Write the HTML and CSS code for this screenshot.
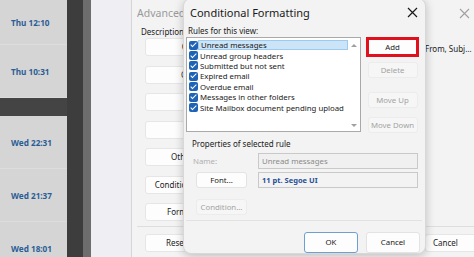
FILE: index.html
```html
<!DOCTYPE html>
<html lang="en">
<head>
    <meta charset="UTF-8">
    <title>Conditional Formatting</title>
    <link rel="stylesheet" href="styles.css">
</head>
<body>
    <div class="screen">
        <div class="msg-list">
            <div class="msg-row short">Thu 12:10</div>
            <div class="msg-row">Thu 10:31</div>
            <div class="msg-band"></div>
            <div class="msg-row">Wed 22:31</div>
            <div class="msg-row">Wed 21:37</div>
            <div class="msg-row">Wed 18:01</div>
        </div>
        <div class="strip-dark"></div>
        <div class="strip-mid"></div>
        <div class="strip-light"></div>

        <div class="adv">
            <div class="adv-title">
                <span class="adv-name">Advanced View Settings: Compact</span>
                <svg width="11" height="11" viewBox="0 0 11 11"><path d="M1 1L10 10M10 1L1 10" stroke="#a0a0a0" stroke-width="1.1"/></svg>
            </div>
            <div class="adv-desc">Description</div>
            <div class="adv-body">
                <div class="adv-col">
                    <div class="adv-btn">Columns...</div>
                    <div class="adv-btn">Group By...</div>
                    <div class="adv-btn">Sort...</div>
                    <div class="adv-btn">Filter...</div>
                    <div class="adv-btn">Other Settings...</div>
                    <div class="adv-btn">Conditional Formatting...</div>
                    <div class="adv-btn">Format Columns...</div>
                </div>
                <div class="adv-values">
                    <div class="adv-value">From, Subject, Received</div>
                </div>
            </div>
            <div class="adv-foot">
                <div class="adv-col">
                    <div class="adv-btn">Reset Current View</div>
                </div>
                <div class="adv-cancel">Cancel</div>
            </div>
        </div>

        <div class="cf">
            <div class="cf-title">
                <span>Conditional Formatting</span>
                <svg width="11" height="11" viewBox="0 0 11 11"><path d="M1 1L10 10M10 1L1 10" stroke="#1a1a1a" stroke-width="1.2"/></svg>
            </div>
            <div class="cf-body">
                <div class="cf-label">Rules for this view:</div>
                <div class="cf-rules">
                    <div class="rule-box">
                        <div class="rule-items">
                            <div class="rule"><span class="check"></span><span class="rule-text selected">Unread messages</span></div>
                            <div class="rule"><span class="check"></span><span class="rule-text">Unread group headers</span></div>
                            <div class="rule"><span class="check"></span><span class="rule-text">Submitted but not sent</span></div>
                            <div class="rule"><span class="check"></span><span class="rule-text">Expired email</span></div>
                            <div class="rule"><span class="check"></span><span class="rule-text">Overdue email</span></div>
                            <div class="rule"><span class="check"></span><span class="rule-text">Messages in other folders</span></div>
                            <div class="rule"><span class="check"></span><span class="rule-text">Site Mailbox document pending upload</span></div>
                        </div>
                        <div class="scrollbar">
                            <span class="arrow up"></span>
                            <span class="arrow down"></span>
                        </div>
                    </div>
                    <div class="rule-actions">
                        <div class="mark"><div class="btn">Add</div></div>
                        <div class="btn disabled">Delete</div>
                        <div class="btn disabled move-up">Move Up</div>
                        <div class="btn disabled">Move Down</div>
                    </div>
                </div>
                <div class="props">
                    <div class="props-title">Properties of selected rule</div>
                    <div class="props-row">
                        <span class="props-name">Name:</span>
                        <div class="field readonly">Unread messages</div>
                    </div>
                    <div class="props-row">
                        <div class="btn small">Font...</div>
                        <div class="field font">11 pt. Segoe UI</div>
                    </div>
                    <div class="props-row cond">
                        <div class="btn small disabled">Condition...</div>
                    </div>
                </div>
                <div class="cf-foot">
                    <div class="btn wide primary">OK</div>
                    <div class="btn wide">Cancel</div>
                </div>
            </div>
        </div>
    </div>
</body>
</html>
```

FILE: styles.css
```css
body {
    margin: 0;
    font-family: "Noto Sans", "Open Sans", sans-serif;
    overflow: hidden;
}
.screen {
    position: relative;
    display: flex;
    width: 474px;
    height: 257px;
    overflow: hidden;
    background-color: #efeff3;
}

/* message list on the left */
.msg-list {
    width: 67px;
    flex: none;
    background-color: #d5d5d5;
}
.msg-row {
    height: 53px;
    box-sizing: border-box;
    border-bottom: 1px solid #dcdcdc;
    padding-left: 11px;
    display: flex;
    align-items: center;
    font-size: 8.2px;
    font-weight: bold;
    color: #2a5d96;
}
.msg-row.short {
    height: 45px;
}
.msg-band {
    height: 18px;
    background-color: #444444;
}
.strip-dark {
    width: 16px;
    flex: none;
    background-color: #3d3d3d;
}
.strip-mid {
    width: 8px;
    flex: none;
    background-color: #6d6d6d;
}
.strip-light {
    width: 40px;
    flex: none;
    border-right: 1px solid #d6d6d6;
}

/* advanced view settings dialog behind */
.adv {
    flex: 1;
    background-color: #f3f3f3;
    display: flex;
    flex-direction: column;
    padding-left: 5px;
}
.adv-title {
    height: 26px;
    display: flex;
    align-items: center;
    justify-content: space-between;
    padding-right: 4px;
    font-size: 10.5px;
    color: #9a9a9a;
}
.adv-name {
    width: 50px;
    overflow: hidden;
    white-space: nowrap;
}
.adv-desc {
    font-size: 8px;
    color: #222;
    padding-left: 4px;
    height: 12px;
    line-height: 12px;
}
.adv-body {
    display: flex;
    padding-left: 8px;
    flex: 1;
}
.adv-col {
    display: flex;
    flex-direction: column;
    gap: 9.5px;
    width: 40px;
    overflow: hidden;
    flex: none;
}
.adv-btn {
    width: 113px;
    height: 18px;
    line-height: 16px;
    box-sizing: border-box;
    background-color: #fdfdfd;
    border: 1px solid #e6e6e6;
    border-radius: 3px;
    text-align: center;
    font-size: 8px;
    color: #222;
    white-space: nowrap;
}
.adv-values {
    padding-left: 240px;
}
.adv-value {
    font-size: 8px;
    color: #222;
    white-space: nowrap;
    overflow: hidden;
    text-overflow: ellipsis;
    width: 47px;
    padding-top: 5px;
}
.adv-foot {
    display: flex;
    align-items: flex-start;
    justify-content: space-between;
    height: 31px;
    box-sizing: border-box;
    border-top: 1px solid #dedede;
    padding: 7px 0 0 8px;
}
.adv-cancel {
    width: 49px;
    height: 18px;
    line-height: 16px;
    box-sizing: border-box;
    font-size: 8px;
    color: #222;
    padding-left: 7px;
    background-color: #fdfdfd;
    border: 1px solid #e6e6e6;
    border-right: none;
    border-radius: 3px 0 0 3px;
}

/* conditional formatting dialog on top */
.cf {
    position: absolute;
    left: 183px;
    top: -2px;
    width: 243px;
    height: 256px;
    box-sizing: border-box;
    background-color: #f3f3f3;
    border: 1px solid #d8d8d8;
    border-radius: 8px;
    box-shadow: 0 2px 10px rgba(0, 0, 0, 0.22);
    display: flex;
    flex-direction: column;
}
.cf-title {
    height: 28px;
    display: flex;
    align-items: center;
    justify-content: space-between;
    padding: 0 7px 0 6px;
    font-size: 11px;
    color: #1a1a1a;
}
.cf-body {
    padding: 0 3px 0 2px;
    display: flex;
    flex-direction: column;
    flex: 1;
}
.cf-label {
    font-size: 8px;
    color: #1a1a1a;
    padding-left: 2px;
    height: 12px;
    line-height: 12px;
}
.cf-rules {
    display: flex;
    gap: 5px;
}
.rule-box {
    width: 175px;
    height: 95px;
    box-sizing: border-box;
    background-color: #fff;
    border: 1px solid #a9a9a9;
    display: flex;
}
.rule-items {
    flex: 1;
    padding: 2px 0 0 2px;
}
.rule {
    display: flex;
    align-items: center;
    height: 10.4px;
}
.check {
    width: 9px;
    height: 9px;
    flex: none;
    border-radius: 2px;
    background-color: #1e63b6;
    position: relative;
}
.check::after {
    content: "";
    position: absolute;
    left: 3px;
    top: 0.5px;
    width: 2px;
    height: 5px;
    border: solid #fff;
    border-width: 0 1.2px 1.2px 0;
    transform: rotate(45deg);
}
.rule-text {
    font-size: 7.8px;
    color: #1a1a1a;
    white-space: nowrap;
    padding-left: 2px;
    height: 10px;
    line-height: 10px;
    box-sizing: border-box;
}
.rule-text.selected {
    flex: 1;
    background-color: #cce4f7;
    border: 1px solid #9ccbef;
    line-height: 8px;
}
.scrollbar {
    width: 12px;
    flex: none;
    display: flex;
    flex-direction: column;
    justify-content: space-between;
    align-items: center;
    padding: 6px 0 4px;
}
.arrow {
    width: 0;
    height: 0;
    border-left: 3px solid transparent;
    border-right: 3px solid transparent;
}
.arrow.up {
    border-bottom: 3px solid #a0a0a0;
}
.arrow.down {
    border-top: 3px solid #a0a0a0;
}
.rule-actions {
    display: flex;
    flex-direction: column;
    align-items: center;
    width: 53px;
}
.mark {
    border: 3px solid #e0101d;
    width: 53px;
    box-sizing: border-box;
    margin-bottom: 5px;
}
.btn {
    height: 16px;
    line-height: 14px;
    box-sizing: border-box;
    background-color: #fdfdfd;
    border: 1px solid #e3e3e3;
    border-radius: 3px;
    text-align: center;
    font-size: 7.8px;
    color: #1a1a1a;
    white-space: nowrap;
}
.mark .btn {
    height: 14px;
    line-height: 14px;
    border: none;
    border-radius: 0;
}
.rule-actions .btn.disabled {
    width: 50px;
}
.btn.disabled {
    color: #a3a3a3;
    background-color: #f6f6f6;
    border-color: #ececec;
}
.btn.move-up {
    margin-top: 14px;
    margin-bottom: 9px;
}
.props {
    margin-top: 4px;
    height: 84px;
    box-sizing: border-box;
    border-bottom: 1px solid #e2e2e2;
    padding: 0 4px 0 6px;
}
.props-title {
    font-size: 8px;
    color: #1a1a1a;
    height: 13px;
    line-height: 13px;
}
.props-row {
    display: flex;
    align-items: center;
    justify-content: space-between;
    margin-top: 3px;
}
.props-row.cond {
    margin-top: 11px;
}
.props-name {
    font-size: 7.8px;
    color: #b0b0b0;
    padding-left: 1px;
}
.field {
    width: 160px;
    height: 16px;
    line-height: 14px;
    box-sizing: border-box;
    border: 1px solid #c9c9c9;
    padding-left: 3px;
    font-size: 7.8px;
    white-space: nowrap;
}
.field.readonly {
    color: #8a8a8a;
    background-color: #f0f0f0;
}
.field.font {
    color: #1f4f96;
    font-weight: bold;
    font-size: 7.5px;
    background-color: #f3f3f3;
}
.btn.small {
    width: 51px;
    margin-left: 4px;
}
.cf-foot {
    display: flex;
    justify-content: flex-end;
    gap: 8px;
    padding: 11px 2px 0 0;
}
.btn.wide {
    width: 54px;
    height: 21px;
    line-height: 19px;
}
.btn.primary {
    border-color: #6e9fd2;
}
```
